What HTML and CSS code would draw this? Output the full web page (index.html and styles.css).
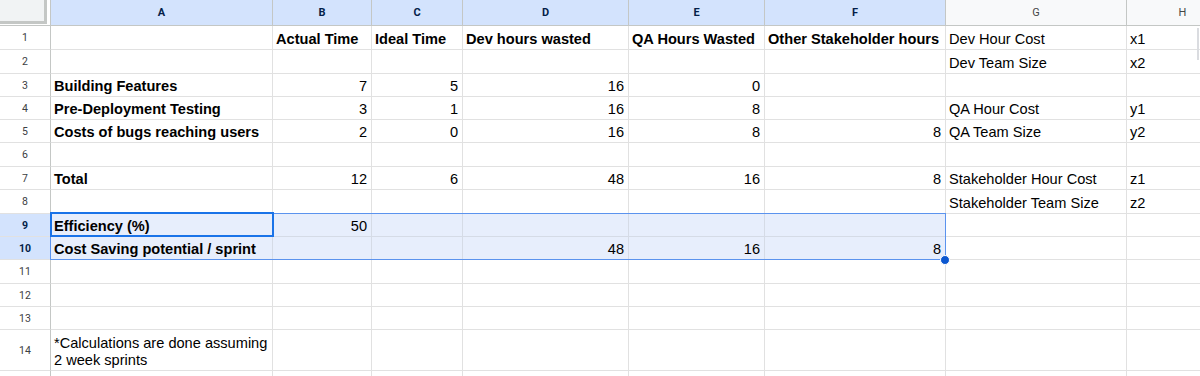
FILE: index.html
```html
<!DOCTYPE html>
<html lang="en">
<head>
<meta charset="utf-8">
<title>Sheet</title>
<link rel="stylesheet" href="styles.css">
</head>
<body>
<div class="sheet">
  <!-- header row -->
  <div class="corner"><div class="corner-inner"></div></div>
  <div class="ch on">A</div><div class="ch on">B</div><div class="ch on">C</div><div class="ch on">D</div><div class="ch on">E</div><div class="ch on">F</div><div class="ch">G</div><div class="ch">H</div>

  <!-- 1 -->
  <div class="rh">1</div>
  <div class="c"></div><div class="c b">Actual Time</div><div class="c b">Ideal Time</div><div class="c b">Dev hours wasted</div><div class="c b">QA Hours Wasted</div><div class="c b">Other Stakeholder hours</div><div class="c">Dev Hour Cost</div><div class="c">x1</div>
  <!-- 2 -->
  <div class="rh">2</div>
  <div class="c"></div><div class="c"></div><div class="c"></div><div class="c"></div><div class="c"></div><div class="c"></div><div class="c">Dev Team Size</div><div class="c">x2</div>
  <!-- 3 -->
  <div class="rh">3</div>
  <div class="c b">Building Features</div><div class="c n">7</div><div class="c n">5</div><div class="c n">16</div><div class="c n">0</div><div class="c"></div><div class="c"></div><div class="c"></div>
  <!-- 4 -->
  <div class="rh">4</div>
  <div class="c b">Pre-Deployment Testing</div><div class="c n">3</div><div class="c n">1</div><div class="c n">16</div><div class="c n">8</div><div class="c"></div><div class="c">QA Hour Cost</div><div class="c">y1</div>
  <!-- 5 -->
  <div class="rh">5</div>
  <div class="c b">Costs of bugs reaching users</div><div class="c n">2</div><div class="c n">0</div><div class="c n">16</div><div class="c n">8</div><div class="c n">8</div><div class="c">QA Team Size</div><div class="c">y2</div>
  <!-- 6 -->
  <div class="rh">6</div>
  <div class="c"></div><div class="c"></div><div class="c"></div><div class="c"></div><div class="c"></div><div class="c"></div><div class="c"></div><div class="c"></div>
  <!-- 7 -->
  <div class="rh">7</div>
  <div class="c b">Total</div><div class="c n">12</div><div class="c n">6</div><div class="c n">48</div><div class="c n">16</div><div class="c n">8</div><div class="c">Stakeholder Hour Cost</div><div class="c">z1</div>
  <!-- 8 -->
  <div class="rh">8</div>
  <div class="c"></div><div class="c"></div><div class="c"></div><div class="c"></div><div class="c"></div><div class="c"></div><div class="c">Stakeholder Team Size</div><div class="c">z2</div>
  <!-- 9 -->
  <div class="rh on">9</div>
  <div class="c b s">Efficiency (%)</div><div class="c n s">50</div><div class="c s"></div><div class="c s"></div><div class="c s"></div><div class="c s"></div><div class="c"></div><div class="c"></div>
  <!-- 10 -->
  <div class="rh on">10</div>
  <div class="c b s">Cost Saving potential / sprint</div><div class="c s"></div><div class="c s"></div><div class="c n s">48</div><div class="c n s">16</div><div class="c n s">8</div><div class="c"></div><div class="c"></div>
  <!-- 11 -->
  <div class="rh">11</div>
  <div class="c"></div><div class="c"></div><div class="c"></div><div class="c"></div><div class="c"></div><div class="c"></div><div class="c"></div><div class="c"></div>
  <!-- 12 -->
  <div class="rh">12</div>
  <div class="c"></div><div class="c"></div><div class="c"></div><div class="c"></div><div class="c"></div><div class="c"></div><div class="c"></div><div class="c"></div>
  <!-- 13 -->
  <div class="rh">13</div>
  <div class="c"></div><div class="c"></div><div class="c"></div><div class="c"></div><div class="c"></div><div class="c"></div><div class="c"></div><div class="c"></div>
  <!-- 14 -->
  <div class="rh">14</div>
  <div class="c wrap">*Calculations are done assuming<br>2 week sprints</div><div class="c"></div><div class="c"></div><div class="c"></div><div class="c"></div><div class="c"></div><div class="c"></div><div class="c"></div>
  <!-- 15 (only its top edge is in view) -->
  <div class="rh"></div>
  <div class="c"></div><div class="c"></div><div class="c"></div><div class="c"></div><div class="c"></div><div class="c"></div><div class="c"></div><div class="c"></div>

  <!-- selection overlays -->
  <div class="range"></div>
  <div class="active"></div>
  <div class="handle"></div>
  <div class="vscroll"></div>
</div>
</body>
</html>
```

FILE: styles.css
```css
html, body {
  margin: 0;
  padding: 0;
  overflow: hidden;
  background: #fff;
}

.sheet {
  position: relative;
  display: grid;
  grid-template-columns: 51px 222px 99px 91px 166px 136px 181px 181px 112px;
  grid-template-rows: 26px 24px 24px 23px 23px 23px 24px 23px 24px 23px 23px 24px 23px 23px 41px 6px;
  width: 1261px;
  height: 376px;
  overflow: hidden;
  font-family: "Liberation Sans", Arial, sans-serif;
  font-size: 14.6px;
  color: #000;
}

.corner {
  background: #fff;
  border-right: 1px solid #c4c7c5;
  border-bottom: 1px solid #c4c7c5;
  box-sizing: border-box;
}

.corner-inner {
  width: 47px;
  height: 24px;
  box-sizing: border-box;
  background: #f1f3f4;
  border-right: 3px solid #c4c7c5;
  border-bottom: 3px solid #c4c7c5;
}

.ch {
  display: flex;
  align-items: center;
  justify-content: center;
  box-sizing: border-box;
  background: #f8f9fa;
  border-right: 1px solid #c4c7c5;
  border-bottom: 1px solid #c4c7c5;
  font-family: Roboto, "Liberation Sans", sans-serif;
  font-size: 11px;
  color: #444746;
}

.ch.on {
  background: #d3e3fd;
  color: #041e49;
  font-weight: 700;
}

.rh {
  display: flex;
  align-items: center;
  justify-content: center;
  box-sizing: border-box;
  background: #fff;
  border-right: 1px solid #c4c7c5;
  border-bottom: 1px solid #e1e1e1;
  font-family: Roboto, "Liberation Sans", sans-serif;
  font-size: 10.5px;
  color: #3c4043;
}

.rh.on {
  background: #d3e3fd;
  color: #041e49;
  font-weight: 700;
}

.c {
  display: flex;
  align-items: flex-end;
  box-sizing: border-box;
  border-right: 1px solid #e1e1e1;
  border-bottom: 1px solid #e1e1e1;
  padding: 0 3px 1px 3px;
  line-height: 17px;
  white-space: nowrap;
}

.c.b {
  font-weight: 700;
}

.c.n {
  justify-content: flex-end;
  padding-right: 4px;
}

.c.s {
  background: #e7eefc;
  border-right-color: #d5dbe6;
  border-bottom-color: #d5dbe6;
}

.c.wrap {
  display: block;
  padding-top: 5px;
}

.range {
  position: absolute;
  left: 50px;
  top: 213px;
  width: 896px;
  height: 47px;
  box-sizing: border-box;
  border: 1px solid #5b93ee;
  pointer-events: none;
}

.active {
  position: absolute;
  left: 50px;
  top: 212px;
  width: 224px;
  height: 25px;
  box-sizing: border-box;
  border: 2px solid #1a73e8;
  pointer-events: none;
}

.handle {
  position: absolute;
  left: 940px;
  top: 255px;
  width: 10px;
  height: 10px;
  box-sizing: border-box;
  border-radius: 50%;
  background: #0b57d0;
  border: 1px solid #fff;
}

.vscroll {
  position: absolute;
  left: 1197px;
  top: 28px;
  width: 2px;
  height: 32px;
  background: #dadce0;
}
```
